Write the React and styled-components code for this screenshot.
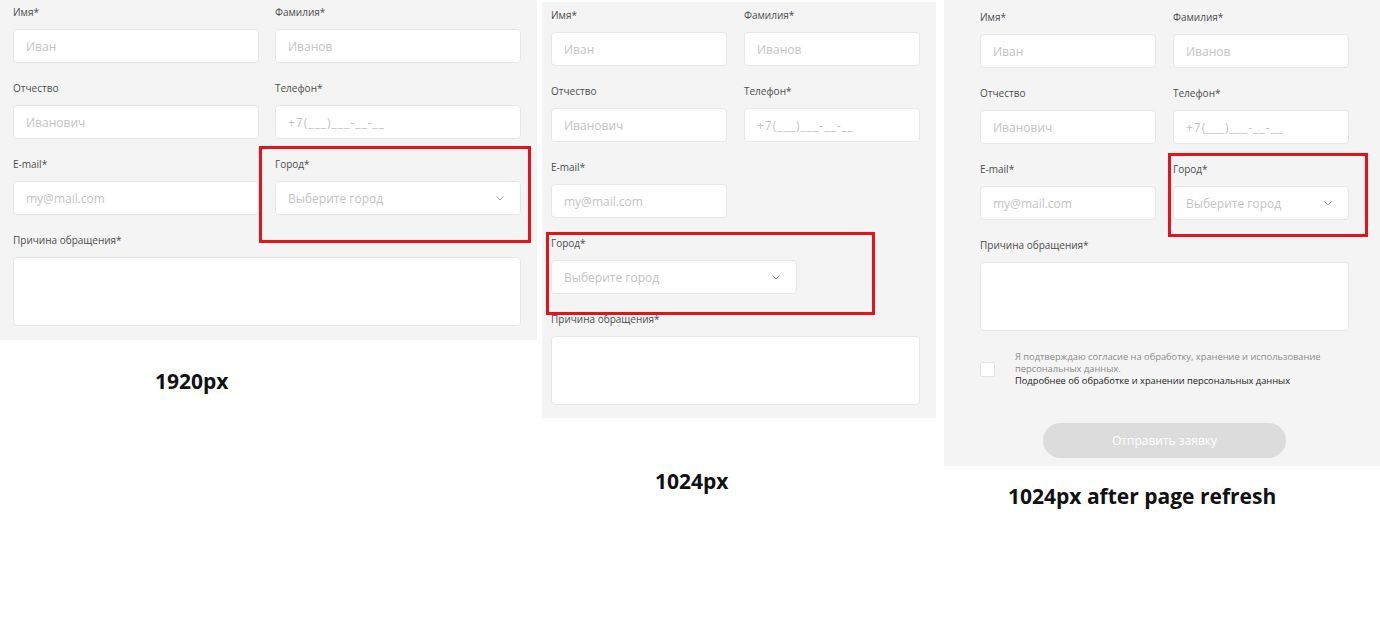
import React from "react";
import styled, { createGlobalStyle } from "styled-components";

const GlobalStyle = createGlobalStyle`
  html, body {
    margin: 0;
    padding: 0;
    background: #ffffff;
  }
  body {
    font-family: "Open Sans", "Liberation Sans", sans-serif;
  }
`;

const Page = styled.div`
  display: flex;
  align-items: flex-start;
  width: 1380px;
  height: 630px;
  overflow: hidden;
`;

const Shot = styled.div`
  width: ${(p) => p.$width}px;
  margin-top: ${(p) => p.$top || 0}px;
  margin-right: ${(p) => p.$gap || 0}px;
  flex-shrink: 0;
`;

const Panel = styled.div`
  background: #f4f4f4;
  padding: ${(p) => p.$padTop}px 0 ${(p) => p.$padBottom}px ${(p) => p.$padLeft}px;
`;

const Form = styled.div`
  display: grid;
  grid-template-columns: ${(p) => p.$col}px ${(p) => p.$col}px;
  column-gap: ${(p) => p.$colGap}px;
  row-gap: 19px;
  align-items: start;
`;

const FieldWrap = styled.div`
  position: relative;
  grid-column: ${(p) => (p.$span ? "1 / -1" : "auto")};
  width: ${(p) => (p.$width ? `${p.$width}px` : "auto")};
`;

const Label = styled.div`
  font-size: 10px;
  line-height: 12px;
  color: #4d4d4d;
  margin-bottom: 11px;
  white-space: nowrap;
`;

const Input = styled.div`
  display: flex;
  align-items: center;
  justify-content: space-between;
  box-sizing: border-box;
  height: ${(p) => p.$height || 34}px;
  padding: 0 12px;
  background: #ffffff;
  border: 1px solid #e7e7e7;
  border-radius: 4px;
  font-size: 12px;
  color: #c3c3c3;
  white-space: nowrap;
`;

const Placeholder = styled.span`
  letter-spacing: ${(p) => p.$spacing || 0}px;
`;

const Chevron = styled.svg`
  width: 8px;
  height: 5px;
  margin-right: 4px;
`;

const Highlight = styled.div`
  position: absolute;
  top: ${(p) => p.$box[0]}px;
  right: ${(p) => p.$box[1]}px;
  bottom: ${(p) => p.$box[2]}px;
  left: ${(p) => p.$box[3]}px;
  border: 3px solid #e5121b;
  pointer-events: none;
  z-index: 2;
`;

const Consent = styled.div`
  display: flex;
  align-items: center;
  margin-top: 20px;
`;

const Checkbox = styled.div`
  width: 15px;
  height: 15px;
  box-sizing: border-box;
  flex-shrink: 0;
  background: #ffffff;
  border: 1px solid #e3e3e3;
  border-radius: 2px;
  margin-right: 20px;
`;

const ConsentText = styled.div`
  font-size: 9.3px;
  line-height: 12px;
  color: #8a8a8a;
`;

const ConsentLink = styled.div`
  color: #222222;
`;

const SubmitRow = styled.div`
  display: flex;
  justify-content: center;
  margin-top: 36px;
  padding-right: ${(p) => p.$shift || 0}px;
`;

const Submit = styled.button`
  width: 243px;
  height: 35px;
  border: none;
  border-radius: 18px;
  background: #dcdcdc;
  color: #ffffff;
  font-family: "Open Sans", "Liberation Sans", sans-serif;
  font-size: 12px;
`;

const Caption = styled.div`
  font-family: "Open Sans", "Liberation Sans", sans-serif;
  font-weight: 700;
  font-size: 21px;
  line-height: 28px;
  color: #111111;
  margin-top: ${(p) => p.$top}px;
  padding-left: ${(p) => p.$left}px;
  white-space: nowrap;
`;

function ChevronIcon() {
  return (
    <Chevron viewBox="0 0 8 5">
      <polyline points="0.5,0.5 4,4 7.5,0.5" fill="none" stroke="#8a8a8a" strokeWidth="0.9" />
    </Chevron>
  );
}

function Field({ label, placeholder, spacing, select, height, span, width, box }) {
  return (
    <FieldWrap $span={span} $width={width}>
      <Label>{label}</Label>
      <Input $height={height}>
        <Placeholder $spacing={spacing}>{placeholder}</Placeholder>
        {select && <ChevronIcon />}
      </Input>
      {box && <Highlight $box={box} />}
    </FieldWrap>
  );
}

function FormFields({ cityOwnRow, cityWidth, box }) {
  return (
    <>
      <Field label="Имя*" placeholder="Иван" />
      <Field label="Фамилия*" placeholder="Иванов" />
      <Field label="Отчество" placeholder="Иванович" />
      <Field label="Телефон*" placeholder="+7(___)___-__-__" spacing={1} />
      <Field label="E-mail*" placeholder="my@mail.com" />
      <Field
        label="Город*"
        placeholder="Выберите город"
        select
        span={cityOwnRow}
        width={cityWidth}
        box={box}
      />
      <Field label="Причина обращения*" placeholder="" height={69} span />
    </>
  );
}

export default function App() {
  return (
    <>
      <GlobalStyle />
      <Page>
        {/* 1920px */}
        <Shot $width={537} $gap={5}>
          <Panel $padTop={6} $padBottom={14} $padLeft={13}>
            <Form $col={246} $colGap={16}>
              <FormFields box={[-12, -10, -28, -16]} />
            </Form>
          </Panel>
          <Caption $top={27} $left={155}>1920px</Caption>
        </Shot>

        {/* 1024px */}
        <Shot $width={394} $gap={8} $top={2}>
          <Panel $padTop={7} $padBottom={13} $padLeft={9}>
            <Form $col={176} $colGap={17}>
              <FormFields cityOwnRow cityWidth={246} box={[-5, -78, -21, -5]} />
            </Form>
          </Panel>
          <Caption $top={49} $left={113}>1024px</Caption>
        </Shot>

        {/* 1024px after page refresh */}
        <Shot $width={436}>
          <Panel $padTop={11} $padBottom={8} $padLeft={36}>
            <Form $col={176} $colGap={17}>
              <FormFields box={[-10, -19, -17, -5]} />
            </Form>
            <Consent>
              <Checkbox />
              <ConsentText>
                Я подтверждаю согласие на обработку, хранение и использование
                <br />
                персональных данных.
                <ConsentLink>Подробнее об обработке и хранении персональных данных</ConsentLink>
              </ConsentText>
            </Consent>
            <SubmitRow $shift={31}>
              <Submit>Отправить заявку</Submit>
            </SubmitRow>
          </Panel>
          <Caption $top={16} $left={64}>1024px after page refresh</Caption>
        </Shot>
      </Page>
    </>
  );
}
